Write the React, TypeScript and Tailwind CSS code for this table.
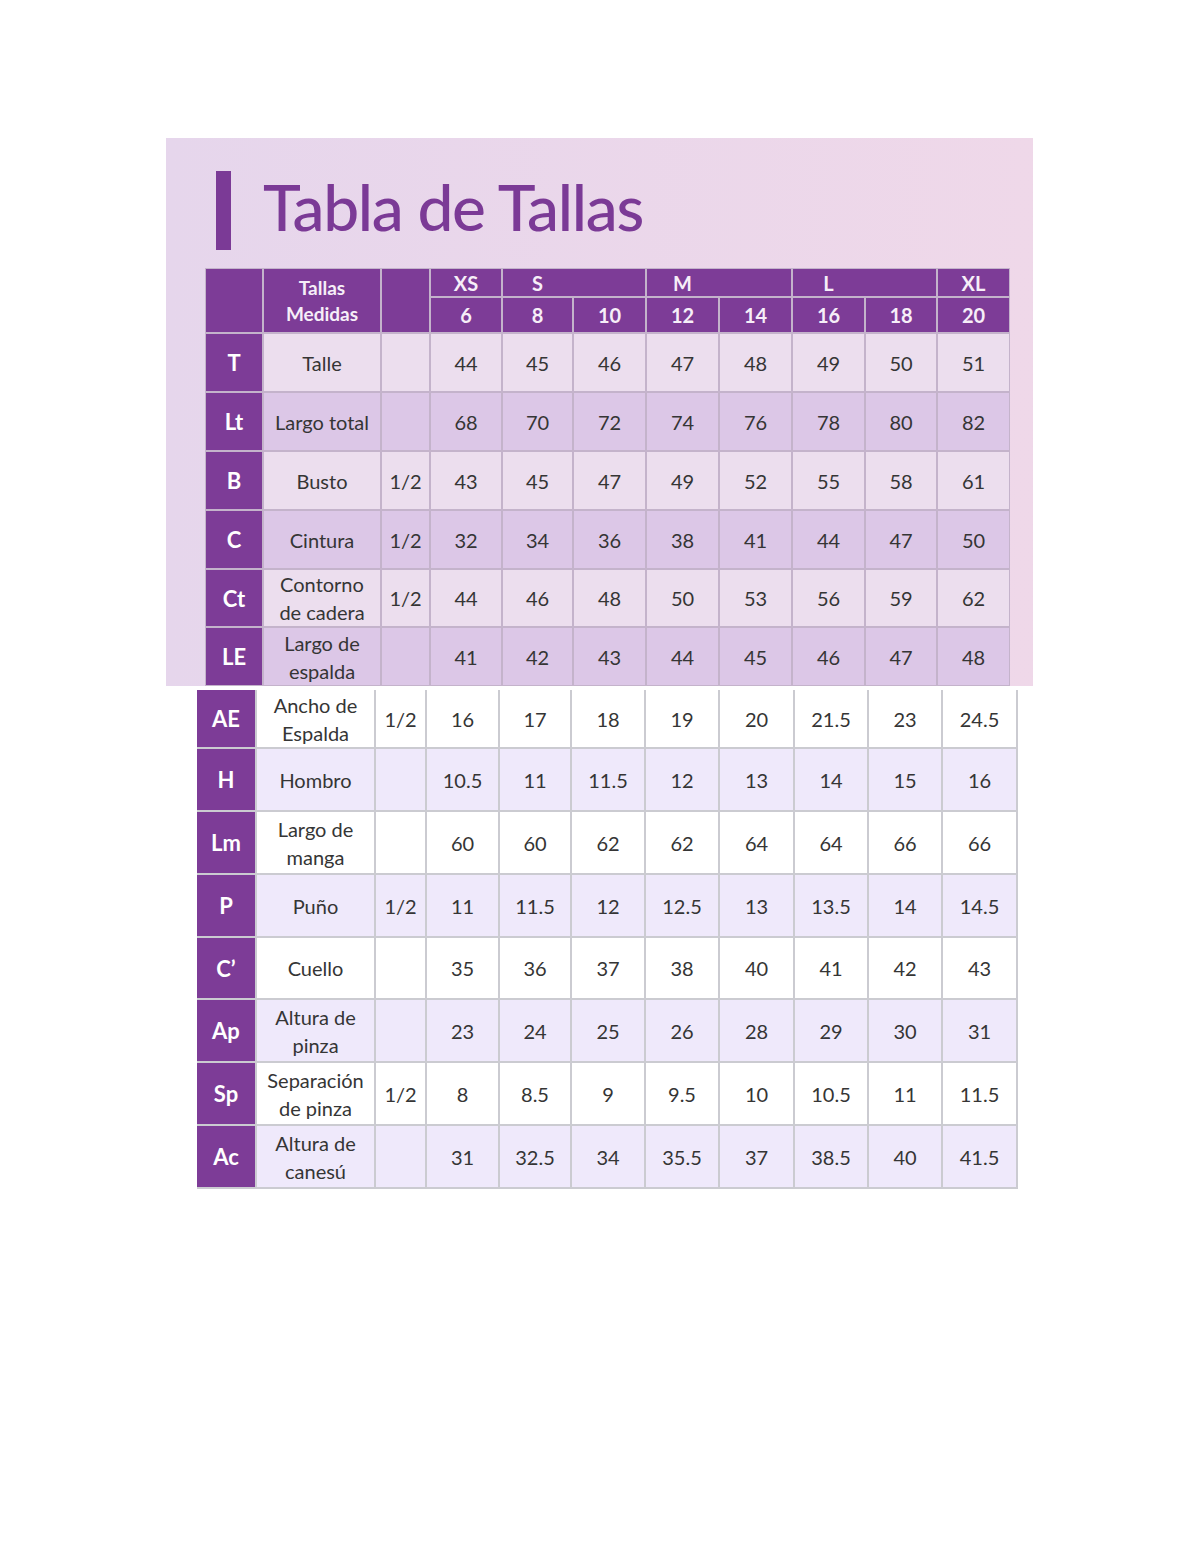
import React from 'react';

type Row = {
  code: string;
  name: string[];
  half: string;
  values: string[];
};

const topRows: Row[] = [
  { code: 'T', name: ['Talle'], half: '', values: ['44', '45', '46', '47', '48', '49', '50', '51'] },
  { code: 'Lt', name: ['Largo total'], half: '', values: ['68', '70', '72', '74', '76', '78', '80', '82'] },
  { code: 'B', name: ['Busto'], half: '1/2', values: ['43', '45', '47', '49', '52', '55', '58', '61'] },
  { code: 'C', name: ['Cintura'], half: '1/2', values: ['32', '34', '36', '38', '41', '44', '47', '50'] },
  { code: 'Ct', name: ['Contorno', 'de cadera'], half: '1/2', values: ['44', '46', '48', '50', '53', '56', '59', '62'] },
  { code: 'LE', name: ['Largo de', 'espalda'], half: '', values: ['41', '42', '43', '44', '45', '46', '47', '48'] },
];

const bottomRows: Row[] = [
  { code: 'AE', name: ['Ancho de', 'Espalda'], half: '1/2', values: ['16', '17', '18', '19', '20', '21.5', '23', '24.5'] },
  { code: 'H', name: ['Hombro'], half: '', values: ['10.5', '11', '11.5', '12', '13', '14', '15', '16'] },
  { code: 'Lm', name: ['Largo de', 'manga'], half: '', values: ['60', '60', '62', '62', '64', '64', '66', '66'] },
  { code: 'P', name: ['Puño'], half: '1/2', values: ['11', '11.5', '12', '12.5', '13', '13.5', '14', '14.5'] },
  { code: 'C’', name: ['Cuello'], half: '', values: ['35', '36', '37', '38', '40', '41', '42', '43'] },
  { code: 'Ap', name: ['Altura de', 'pinza'], half: '', values: ['23', '24', '25', '26', '28', '29', '30', '31'] },
  { code: 'Sp', name: ['Separación', 'de pinza'], half: '1/2', values: ['8', '8.5', '9', '9.5', '10', '10.5', '11', '11.5'] },
  { code: 'Ac', name: ['Altura de', 'canesú'], half: '', values: ['31', '32.5', '34', '35.5', '37', '38.5', '40', '41.5'] },
];

const font = { fontFamily: 'Lato, "Open Sans", "Noto Sans", sans-serif' };

function CodeCell({ code }: { code: string }) {
  return (
    <div className="bg-[#7d3c97] flex items-center justify-center text-white font-bold text-[22px]">
      {code}
    </div>
  );
}

function TextCell({ bg, children }: { bg: string; children: React.ReactNode }) {
  return (
    <div className={`${bg} flex flex-col items-center justify-center text-center text-[#353535] text-[20px] leading-[28px]`}>
      {children}
    </div>
  );
}

function DataRows({ rows, bgFor }: { rows: Row[]; bgFor: (i: number) => string }) {
  return (
    <>
      {rows.map((r, i) => {
        const bg = bgFor(i);
        return (
          <React.Fragment key={r.code}>
            <CodeCell code={r.code} />
            <TextCell bg={bg}>
              {r.name.map((n) => (
                <span key={n}>{n}</span>
              ))}
            </TextCell>
            <TextCell bg={bg}>{r.half}</TextCell>
            {r.values.map((v, j) => (
              <TextCell key={j} bg={bg}>
                {v}
              </TextCell>
            ))}
          </React.Fragment>
        );
      })}
    </>
  );
}

function TopTable() {
  const head = 'bg-[#7d3c97] text-[#f6eef8] font-bold text-[20px] flex items-center justify-center';
  return (
    <div
      className="grid gap-[2px] p-[1px] bg-[#c4b3cb] w-[805px] grid-cols-[56px_116px_47px_70px_69px_71px_71px_71px_71px_70px_71px] grid-rows-[27px_34px_57px_57px_57px_57px_56px_57px]"
    >
      <div className="bg-[#7d3c97] row-span-2" />
      <div className="bg-[#7d3c97] row-span-2 flex flex-col items-center justify-center text-[#f6eef8] font-bold text-[19px] leading-[26px]">
        <span>Tallas</span>
        <span>Medidas</span>
      </div>
      <div className="bg-[#7d3c97] row-span-2" />
      <div className={head}>XS</div>
      <div className="bg-[#7d3c97] col-span-2 flex items-center text-[#f6eef8] font-bold text-[20px]">
        <span className="w-[69px] text-center">S</span>
      </div>
      <div className="bg-[#7d3c97] col-span-2 flex items-center text-[#f6eef8] font-bold text-[20px]">
        <span className="w-[71px] text-center">M</span>
      </div>
      <div className="bg-[#7d3c97] col-span-2 flex items-center text-[#f6eef8] font-bold text-[20px]">
        <span className="w-[71px] text-center">L</span>
      </div>
      <div className={head}>XL</div>
      {['6', '8', '10', '12', '14', '16', '18', '20'].map((s) => (
        <div key={s} className={head}>
          {s}
        </div>
      ))}
      <DataRows rows={topRows} bgFor={(i) => (i % 2 === 0 ? 'bg-[#ecdeee]' : 'bg-[#dcc7e7]')} />
    </div>
  );
}

function BottomTable() {
  return (
    <div
      className="grid gap-[2px] pr-[2px] pb-[2px] bg-[#cbcbd1] w-[821px] grid-cols-[58px_117px_49px_71px_70px_72px_72px_73px_72px_72px_73px] grid-rows-[57px_61px_61px_61px_60px_61px_61px_61px]"
    >
      <DataRows rows={bottomRows} bgFor={(i) => (i % 2 === 0 ? 'bg-white' : 'bg-[#efe9fb]')} />
    </div>
  );
}

export default function App() {
  return (
    <div className="w-[1200px] h-[1553px] bg-white pt-[138px]" style={font}>
      <div className="ml-[166px] w-[867px] h-[548px] bg-gradient-to-r from-[#e6d6ec] to-[#efd8e9] flex flex-col">
        <div className="h-[130px] flex items-start pt-[33px]">
          <div className="ml-[50px] w-[15px] h-[79px] bg-[#7b3a96]" />
          <h1 className="ml-[32px] -mt-[4px] text-[64px] leading-[80px] font-medium tracking-[-0.02em] text-[#7b3a96]">
            Tabla de Tallas
          </h1>
        </div>
        <div className="ml-[39px]">
          <TopTable />
        </div>
      </div>
      <div className="ml-[197px] mt-[4px]">
        <BottomTable />
      </div>
    </div>
  );
}
